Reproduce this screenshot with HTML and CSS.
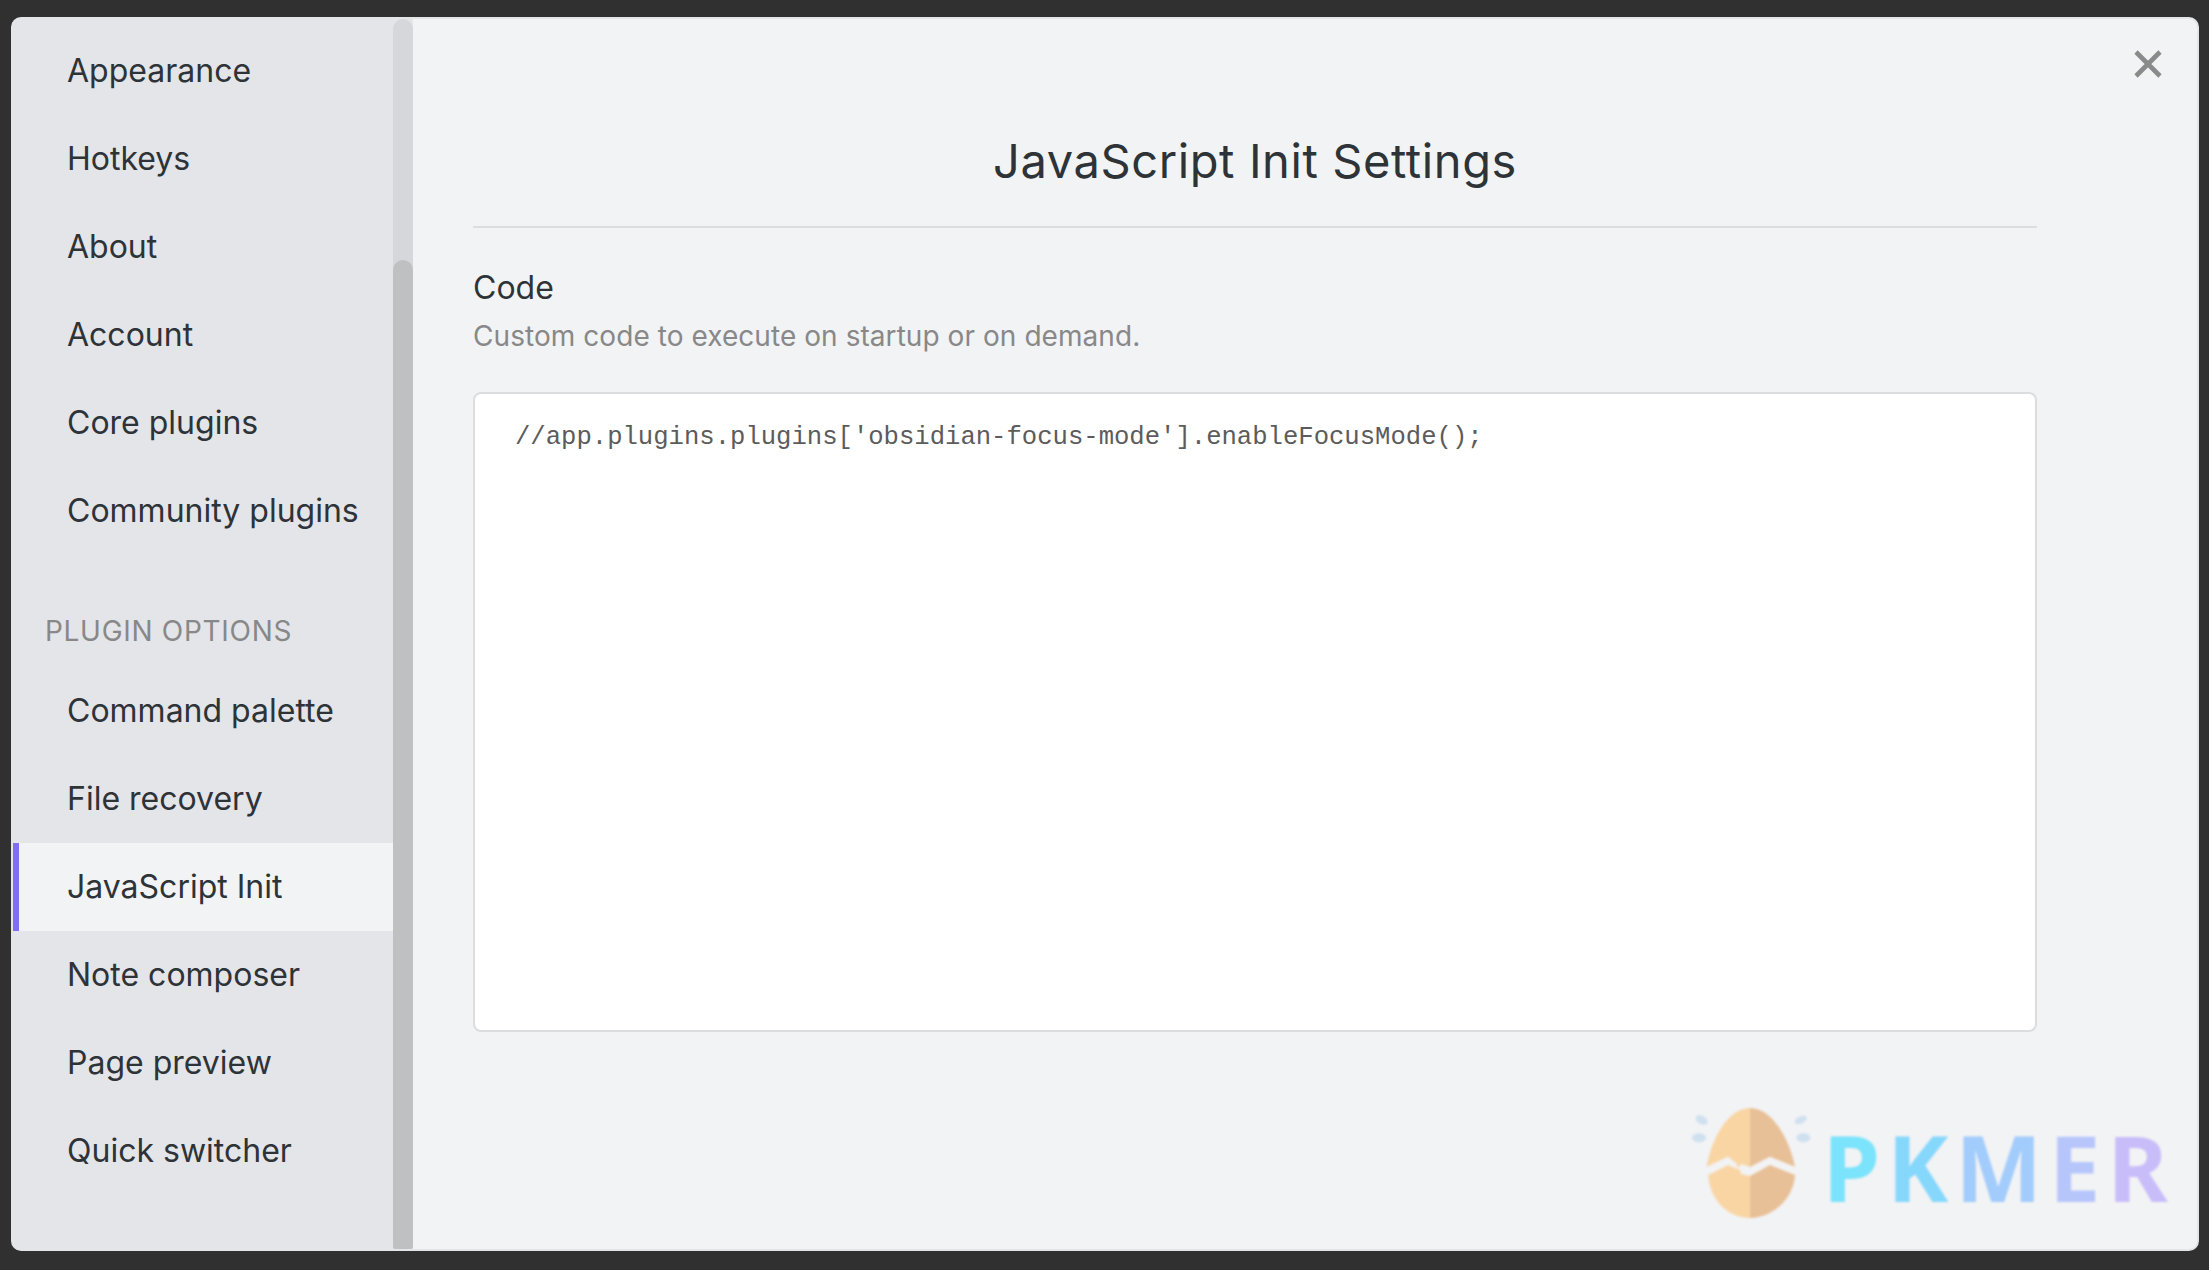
FILE: index.html
```html
<!DOCTYPE html>
<html lang="en">
<head>
<meta charset="utf-8">
<title>JavaScript Init Settings</title>
<link rel="stylesheet" href="styles.css">
</head>
<body>
<div class="modal">
  <aside class="sidebar">
    <nav class="nav">
      <div class="item">Appearance</div>
      <div class="item">Hotkeys</div>
      <div class="item">About</div>
      <div class="item">Account</div>
      <div class="item">Core plugins</div>
      <div class="item">Community plugins</div>
      <div class="section">Plugin options</div>
      <div class="item">Command palette</div>
      <div class="item">File recovery</div>
      <div class="item active">JavaScript Init</div>
      <div class="item">Note composer</div>
      <div class="item">Page preview</div>
      <div class="item">Quick switcher</div>
    </nav>
    <div class="track"><div class="thumb"></div></div>
  </aside>
  <main class="content">
    <svg class="close" width="30" height="30" viewBox="0 0 30 30" aria-hidden="true"><path d="M3 3 L27 27 M27 3 L3 27" fill="none" stroke="#8a8a8a" stroke-width="4.6"/></svg>
    <div class="column">
      <h1 class="title">JavaScript Init Settings</h1>
      <div class="label">Code</div>
      <div class="desc">Custom code to execute on startup or on demand.</div>
      <div class="editor">//app.plugins.plugins['obsidian-focus-mode'].enableFocusMode();</div>
    </div>
    <div class="watermark">
      <svg class="egg" width="122" height="111" viewBox="0 0 122 111" aria-hidden="true">
        <path d="M60 0C37 0 21 33 16.700 58.700L38 48.700L47 56L47 60L52 56L60 59V0Z" fill="#f9d5a4"/>
        <path d="M60 0C83 0 100 33 105 58.700L80 48.700L60 59V0Z" fill="#e8c097"/>
        <path d="M18.300 67L38 57L50 62L51 66L60 68V110C37 110 19 90 18.300 67Z" fill="#f9d5a4"/>
        <path d="M60 68L80 57L105 67C104 90 83 110 60 110V68Z" fill="#e8c097"/>
        <ellipse cx="11.700" cy="12" rx="6.500" ry="4" transform="rotate(30 11.700 12)" fill="#cfe0ef"/>
        <ellipse cx="9" cy="29.700" rx="7" ry="4.500" fill="#cfe0ef"/>
        <ellipse cx="110.700" cy="12" rx="6.500" ry="3.500" transform="rotate(-25 110.700 12)" fill="#cfe0ef"/>
        <ellipse cx="113.300" cy="29.700" rx="7" ry="4.500" fill="#cfe0ef"/>
      </svg>
      <div class="brand"><span class="b1">P</span><span class="b2">K</span><span class="b3">M</span><span class="b4">E</span><span class="b5">R</span></div>
    </div>
  </main>
</div>
</body>
</html>
```
FILE: styles.css
```css
* { box-sizing: border-box; }
html, body { height: 100%; }
body {
  margin: 0;
  padding: 17px 10px 19px 11px;
  background: #303030;
  font-family: Inter, "Liberation Sans", sans-serif;
  color: #2e3338;
  overflow: hidden;
}
.modal {
  display: flex;
  height: 100%;
  border: 2px solid #e3e5e8;
  border-radius: 10px;
  background: #f2f3f5;
  overflow: hidden;
}
.sidebar {
  display: flex;
  width: 400px;
  flex: none;
  background: #e3e5e8;
}
.nav {
  flex: 1;
  padding-top: 8px;
}
.item {
  display: flex;
  align-items: center;
  height: 88px;
  padding-left: 54px;
  font-size: 32px;
  line-height: 40px;
}
.item.active {
  background: #f2f3f5;
  border-left: 6px solid #7f6df2;
  padding-left: 48px;
}
.section {
  display: flex;
  align-items: center;
  height: 112px;
  padding: 40px 0 0 32px;
  font-size: 28px;
  letter-spacing: 0.7px;
  text-transform: uppercase;
  color: #888888;
}
.track {
  width: 20px;
  flex: none;
  padding-top: 241px;
  background: #d6d7da;
  border-radius: 10px 10px 0 0;
}
.thumb {
  height: 100%;
  background: #bfc0c2;
  border-radius: 10px 10px 3px 3px;
}
.content {
  position: relative;
  flex: 1;
  padding: 0 160px 0 60px;
}
.close {
  position: absolute;
  top: 30px;
  right: 34px;
}
.title {
  margin: 0;
  height: 209px;
  padding-top: 112px;
  border-bottom: 2px solid #dcddde;
  text-align: center;
  font-size: 47px;
  letter-spacing: 0.6px;
  font-weight: 400;
  line-height: 60px;
}
.label {
  margin-top: 38px;
  font-size: 32px;
  line-height: 44px;
}
.desc {
  margin-top: 4px;
  font-size: 28px;
  letter-spacing: 0.06px;
  line-height: 44px;
  color: #888888;
}
.editor {
  margin-top: 34px;
  height: 640px;
  padding: 24px 40px;
  background: #ffffff;
  border: 2px solid #dcddde;
  border-radius: 8px;
  font-family: "Liberation Mono", monospace;
  font-size: 25.6px;
  line-height: 40px;
  color: #5c5c5c;
  white-space: pre;
}
.watermark {
  position: absolute;
  left: 1277px;
  top: 1089px;
  display: flex;
  filter: blur(1px);
}
.brand {
  position: absolute;
  left: 133px;
  top: -6px;
  display: flex;
  font-family: "Noto Sans", sans-serif;
  font-weight: 700;
  font-size: 92px;
  line-height: 130px;
}
.brand span { display: block; margin-right: 7px; }
.b1 { color: #7be3fb; }
.b2 { color: #85d7fc; }
.b3 { color: #a2ccfb; }
.b4 { color: #b6c6fb; }
.b5 { color: #c9bdf9; }
```
